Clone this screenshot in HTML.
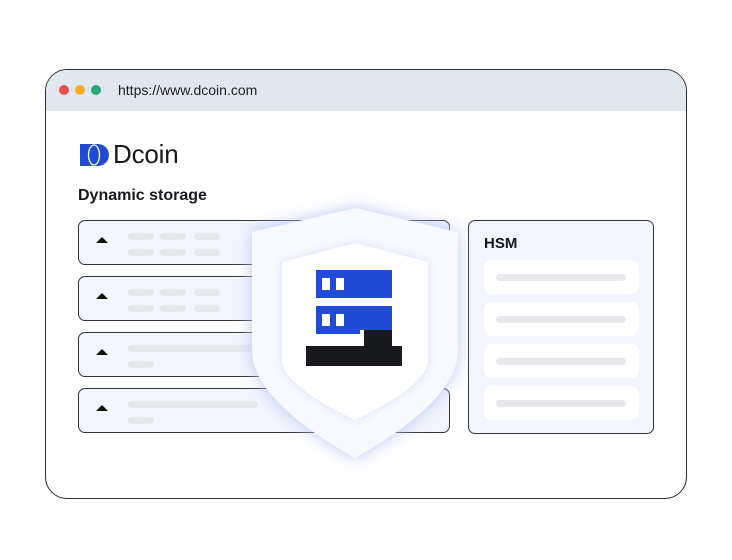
<!DOCTYPE html>
<html><head><meta charset="utf-8"><style>
*{margin:0;padding:0;box-sizing:border-box}
body{width:732px;height:560px;background:#fff;position:relative;overflow:hidden;font-family:"Liberation Sans",sans-serif;color:#17191c}
.win{position:absolute;left:45px;top:69px;width:642px;height:430px;border:1px solid #2a2d31;border-radius:22px;overflow:hidden;background:#fff}
.bar{position:absolute;left:0;top:0;right:0;height:41px;background:#e1e7ef}
.dot{position:absolute;top:15px;width:10px;height:10px;border-radius:50%}
.url{position:absolute;left:72px;top:12px;font-size:14px;color:#1d1f22}
.abs{position:absolute}
.row{position:absolute;left:78px;width:372px;height:45px;background:#f2f5fd;border:1px solid #33363a;border-radius:7px}
.tri{position:absolute;left:17px;top:16px;width:0;height:0;border-left:6px solid transparent;border-right:6px solid transparent;border-bottom:6px solid #111}
.p{position:absolute;height:7px;border-radius:4px;background:#e6e8ec}
.hsm{position:absolute;left:468px;top:220px;width:186px;height:214px;background:#f2f5fd;border:1px solid #33363a;border-radius:7px}
.hb{position:absolute;left:15px;width:155px;height:34px;background:#fff;border-radius:8px}
.hb i{position:absolute;left:12px;top:14px;width:130px;height:7px;border-radius:4px;background:#e6e8ec}
</style></head><body>
<div class="win">
 <div class="bar">
  <div class="dot" style="left:13px;background:#ef4d4d"></div>
  <div class="dot" style="left:29px;background:#f8ad24"></div>
  <div class="dot" style="left:45px;background:#28a877"></div>
  <div class="url">https://www.dcoin.com</div>
 </div>
</div>
<svg class="abs" style="left:80px;top:144px" width="29" height="22" viewBox="0 0 29 22">
 <path d="M0 0H18A11 11 0 0 1 18 22H0Z" fill="#1f4bd6"/>
 <ellipse cx="14" cy="11" rx="5.5" ry="10" fill="none" stroke="#fff" stroke-width="1.3"/>
</svg>
<div class="abs" style="left:113px;top:139px;font-size:26px;font-weight:500;letter-spacing:-0.2px">Dcoin</div>
<div class="abs" style="left:78px;top:187px;font-size:16px;font-weight:bold">Dynamic storage</div>

<div class="row" style="top:220px"><div class="tri"></div>
 <div class="p" style="left:49px;top:12px;width:26px"></div><div class="p" style="left:81px;top:12px;width:26px"></div><div class="p" style="left:115px;top:12px;width:26px"></div>
 <div class="p" style="left:49px;top:28px;width:26px"></div><div class="p" style="left:81px;top:28px;width:26px"></div><div class="p" style="left:115px;top:28px;width:26px"></div></div>
<div class="row" style="top:276px"><div class="tri"></div>
 <div class="p" style="left:49px;top:12px;width:26px"></div><div class="p" style="left:81px;top:12px;width:26px"></div><div class="p" style="left:115px;top:12px;width:26px"></div>
 <div class="p" style="left:49px;top:28px;width:26px"></div><div class="p" style="left:81px;top:28px;width:26px"></div><div class="p" style="left:115px;top:28px;width:26px"></div></div>
<div class="row" style="top:332px"><div class="tri"></div>
 <div class="p" style="left:49px;top:12px;width:130px"></div><div class="p" style="left:49px;top:28px;width:26px"></div></div>
<div class="row" style="top:388px"><div class="tri"></div>
 <div class="p" style="left:49px;top:12px;width:130px"></div><div class="p" style="left:49px;top:28px;width:26px"></div></div>

<div class="hsm">
 <div class="abs" style="left:15px;top:14px;font-size:15px;font-weight:bold">HSM</div>
 <div class="hb" style="top:39px"><i></i></div>
 <div class="hb" style="top:81px"><i></i></div>
 <div class="hb" style="top:123px"><i></i></div>
 <div class="hb" style="top:165px"><i></i></div>
</div>

<svg class="abs" style="left:220px;top:180px" width="270" height="310" viewBox="220 180 270 310">
 <defs>
  <filter id="g" x="-30%" y="-30%" width="160%" height="160%"><feGaussianBlur stdDeviation="8"/></filter>
  <filter id="g2" x="-30%" y="-30%" width="160%" height="160%"><feGaussianBlur stdDeviation="5"/></filter>
 </defs>
 <path d="M355 208 L252 232 L252 350 Q252 400 355 458 Q458 400 458 350 L458 232 Z" fill="#b9c6f4" filter="url(#g)"/>
 <path d="M355 208 L252 232 L252 350 Q252 400 355 458 Q458 400 458 350 L458 232 Z" fill="#f8f9ff"/>
 <path d="M355 243 L282 262 L282 360 Q282 385 355 420 Q428 385 428 360 L428 262 Z" fill="#d8dff8" filter="url(#g2)"/>
 <path d="M355 243 L282 262 L282 360 Q282 385 355 420 Q428 385 428 360 L428 262 Z" fill="#fff"/>
 <rect x="316" y="270" width="76" height="28" fill="#1f4bd6"/>
 <path d="M316 306H392V330H360V334H316Z" fill="#1f4bd6"/>
 <rect x="322" y="278" width="8" height="12" fill="#fff"/><rect x="336" y="278" width="8" height="12" fill="#fff"/>
 <rect x="322" y="314" width="8" height="12" fill="#fff"/><rect x="336" y="314" width="8" height="12" fill="#fff"/>
 <path d="M364 330H392V346H402V366H306V346H364Z" fill="#17191c"/>
</svg>
</body></html>
